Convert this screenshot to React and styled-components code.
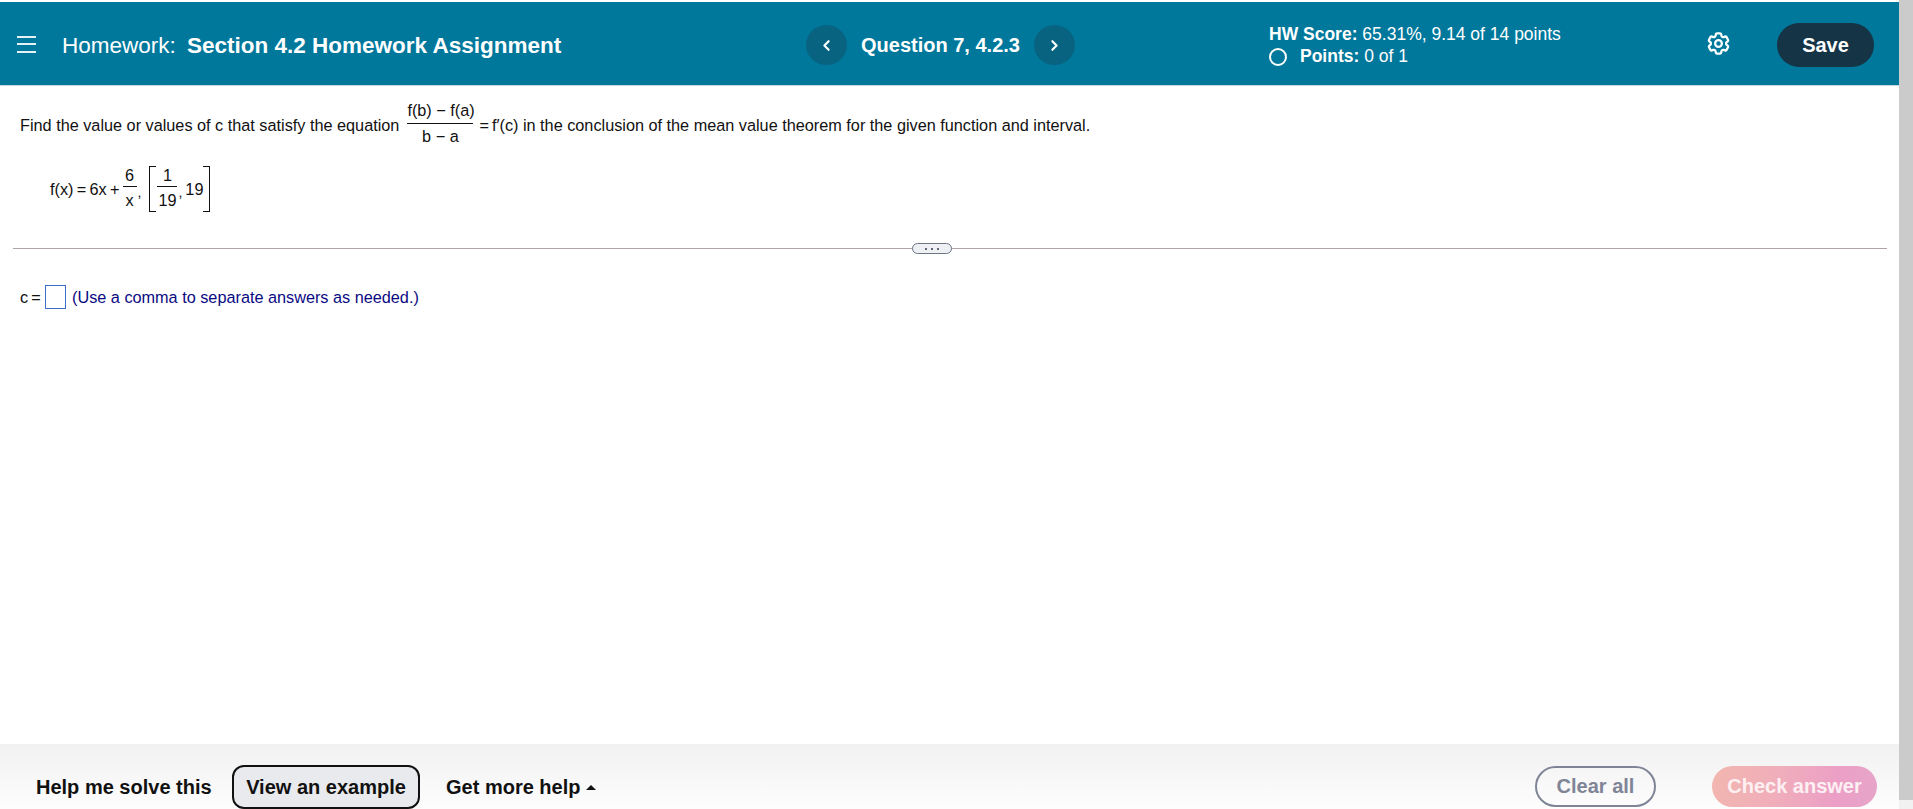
import React from "react";
import styled, { createGlobalStyle } from "styled-components";
import { ChevronLeft, ChevronRight } from "lucide-react";
import { HiOutlineCog6Tooth } from "react-icons/hi2";

const Global = createGlobalStyle`
  html, body {
    margin: 0;
    padding: 0;
    height: 100%;
    overflow: hidden;
    background: #fff;
  }
  body {
    font-family: "Liberation Sans", Arial, sans-serif;
    color: #111;
  }
`;

const App = () => {
  return (
    <>
      <Global />
      <Page>
        <Main>
          <Header>
            <HeaderLeft>
              <Burger>
                <span />
                <span />
                <span />
              </Burger>
              <Title>
                Homework: <strong>Section 4.2 Homework Assignment</strong>
              </Title>
            </HeaderLeft>
            <HeaderNav>
              <NavButton>
                <ChevronLeft size={17} strokeWidth={3} />
              </NavButton>
              <QuestionLabel>Question 7, 4.2.3</QuestionLabel>
              <NavButton>
                <ChevronRight size={17} strokeWidth={3} />
              </NavButton>
            </HeaderNav>
            <Score>
              <ScoreLine>
                <b>HW Score:</b> 65.31%, 9.14 of 14 points
              </ScoreLine>
              <ScoreLine>
                <Radio />
                <b>Points:</b> 0 of 1
              </ScoreLine>
            </Score>
            <GearWrap>
              <HiOutlineCog6Tooth size={27} strokeWidth={2} />
            </GearWrap>
            <SaveButton>Save</SaveButton>
          </Header>

          <Question>
            <Prompt>
              <span>Find the value or values of c that satisfy the equation</span>
              <PromptFraction>
                <Top>f(b) − f(a)</Top>
                <Bottom>b − a</Bottom>
              </PromptFraction>
              <Tight>= f′(c)</Tight>
              <span> in the conclusion of the mean value theorem for the given function and interval.</span>
            </Prompt>
            <Formula>
              <FormulaText>f(x) = 6x +</FormulaText>
              <SmallFraction $width={14}>
                <SmallTop>6</SmallTop>
                <SmallBottom>x</SmallBottom>
              </SmallFraction>
              <Comma $after={8}>,</Comma>
              <Bracket />
              <BracketBody>
                <SmallFraction $width={20} $left={1}>
                  <SmallTop>1</SmallTop>
                  <SmallBottom>19</SmallBottom>
                </SmallFraction>
                <Comma $after={3}>,</Comma>
                <span>19</span>
              </BracketBody>
              <Bracket $right />
            </Formula>
          </Question>

          <Divider>
            <Pill>
              <i />
              <i />
              <i />
            </Pill>
          </Divider>

          <Answer>
            <AnswerLabel>c =</AnswerLabel>
            <AnswerBox />
            <Hint>(Use a comma to separate answers as needed.)</Hint>
          </Answer>

          <Footer>
            <HelpLink>Help me solve this</HelpLink>
            <ExampleButton>View an example</ExampleButton>
            <MoreHelp>
              Get more help
              <Caret />
            </MoreHelp>
            <FooterRight>
              <ClearButton>Clear all</ClearButton>
              <CheckButton>Check answer</CheckButton>
            </FooterRight>
          </Footer>
        </Main>
        <Scrollbar>
          <ScrollCorner />
        </Scrollbar>
      </Page>
    </>
  );
};

export default App;

const Page = styled.div`
  display: flex;
  width: 1913px;
  height: 809px;
  overflow: hidden;
`;

const Main = styled.div`
  width: 1899px;
  height: 809px;
  display: flex;
  flex-direction: column;
`;

const Scrollbar = styled.div`
  width: 14px;
  height: 809px;
  background: #cbcbcb;
  display: flex;
  flex-direction: column;
  justify-content: flex-end;
`;

const ScrollCorner = styled.div`
  height: 9px;
  background: #f1f1f1;
`;

const Header = styled.header`
  margin-top: 2px;
  height: 84px;
  box-sizing: border-box;
  flex: none;
  background: #00789c;
  border-bottom: 1px solid #c5d6de;
  color: #fff;
  display: flex;
  align-items: center;
  padding: 3px 25px 0 17px;
`;

const HeaderLeft = styled.div`
  display: flex;
  align-items: center;
  width: 789px;
`;

const Burger = styled.div`
  width: 19px;
  margin: 0 26px 2px 0;
  display: flex;
  flex-direction: column;
  gap: 5.5px;

  span {
    display: block;
    height: 2px;
    background: #e6f1f5;
  }
`;

const Title = styled.div`
  font-size: 22.5px;
  white-space: pre;
  padding-top: 1px;

  strong {
    font-weight: 700;
    margin-left: 5px;
  }
`;

const HeaderNav = styled.div`
  display: flex;
  align-items: center;
  width: 463px;
`;

const NavButton = styled.div`
  width: 41px;
  height: 40px;
  border-radius: 50%;
  background: #086381;
  display: flex;
  align-items: center;
  justify-content: center;
`;

const QuestionLabel = styled.div`
  font-size: 20px;
  font-weight: 700;
  margin: 0 14px;
`;

const Score = styled.div`
  width: 431px;
  font-size: 17.5px;
  display: flex;
  flex-direction: column;
  gap: 1px;
  padding-top: 1px;
`;

const ScoreLine = styled.div`
  display: flex;
  align-items: center;
  white-space: pre;

  b {
    font-weight: 700;
  }
`;

const Radio = styled.span`
  width: 14px;
  height: 14px;
  border: 2px solid #fff;
  border-radius: 50%;
  margin-right: 13px;
`;

const GearWrap = styled.div`
  width: 60px;
  margin: 0 0 3px 5px;
  display: flex;
`;

const SaveButton = styled.div`
  width: 97px;
  height: 44px;
  border-radius: 22px;
  background: #153446;
  color: #fff;
  font-size: 20px;
  font-weight: 700;
  display: flex;
  align-items: center;
  justify-content: center;
  margin-left: auto;
`;

const Question = styled.div`
  height: 162px;
  flex: none;
  padding: 0 20px;
  font-size: 16.25px;
`;

const Prompt = styled.div`
  display: flex;
  align-items: center;
  height: 60px;
  padding-top: 9px;
  white-space: pre;
`;

const PromptFraction = styled.div`
  display: flex;
  flex-direction: column;
  align-items: center;
  width: 66px;
  margin: 0 6px 4px 8px;
`;

const Tight = styled.span`
  word-spacing: -1.5px;
`;

const Top = styled.div`
  align-self: stretch;
  text-align: center;
  border-bottom: 1px solid #111;
  padding-bottom: 4px;
  line-height: 18px;
`;

const Bottom = styled.div`
  text-align: center;
  padding-top: 3px;
  line-height: 18px;
`;

const Formula = styled.div`
  display: flex;
  align-items: center;
  height: 46px;
  margin: 11px 0 0 30px;
  white-space: pre;
`;

const FormulaText = styled.span`
  word-spacing: -1.2px;
  margin-right: 3px;
`;

const SmallFraction = styled.div`
  display: flex;
  flex-direction: column;
  align-items: center;
  width: ${(p) => p.$width}px;
  margin: 0 0 3px ${(p) => p.$left || 0}px;
`;

const SmallTop = styled(Top)`
  padding-bottom: 2px;
`;

const SmallBottom = styled(Bottom)`
  padding-top: 4px;
`;

const Comma = styled.span`
  font-size: 14px;
  margin: 6px ${(p) => p.$after}px 0 1px;
`;

const Bracket = styled.span`
  width: 6px;
  height: 44px;
  border: 1px solid #111;
  border-width: 1px 0 1px 1px;
  ${(p) => p.$right && "border-width: 1px 1px 1px 0;"}
`;

const BracketBody = styled.div`
  display: flex;
  align-items: center;
`;

const Divider = styled.div`
  position: relative;
  height: 1px;
  flex: none;
  margin: 0 12px 0 13px;
  background: #b1a3aa;
`;

const Pill = styled.div`
  position: absolute;
  left: 899px;
  top: -5px;
  width: 38px;
  height: 9px;
  border: 1px solid #6b7584;
  border-radius: 6px;
  background: #eef0f3;
  display: flex;
  align-items: center;
  justify-content: center;
  gap: 4px;

  i {
    width: 2px;
    height: 2px;
    background: #5c6675;
  }
`;

const Answer = styled.div`
  margin-top: 36px;
  padding-left: 20px;
  height: 24px;
  display: flex;
  align-items: center;
  font-size: 16.25px;
  flex: none;
`;

const AnswerLabel = styled.span`
  width: 25px;
  word-spacing: -1.5px;
  padding-top: 1px;
`;

const AnswerBox = styled.div`
  width: 19px;
  height: 22px;
  border: 1px solid #3b6fc4;
  margin-right: 6px;
`;

const Hint = styled.span`
  color: #0a0a82;
  padding-top: 1px;
`;

const Footer = styled.footer`
  margin-top: auto;
  height: 65px;
  flex: none;
  box-sizing: border-box;
  padding: 21px 22px 0 36px;
  background: linear-gradient(#f1f1f2, #fdfdfd);
  display: flex;
  align-items: flex-start;
  overflow: hidden;
`;

const HelpLink = styled.div`
  font-size: 20px;
  font-weight: 700;
  line-height: 44px;
  width: 196px;
`;

const ExampleButton = styled.div`
  box-sizing: border-box;
  width: 188px;
  height: 44px;
  border: 2px solid #111;
  border-radius: 12px;
  background: #e9eaed;
  font-size: 20px;
  font-weight: 700;
  display: flex;
  align-items: center;
  justify-content: center;
`;

const MoreHelp = styled.div`
  margin-left: 26px;
  font-size: 20px;
  font-weight: 700;
  line-height: 44px;
  display: flex;
  align-items: center;
`;

const Caret = styled.span`
  margin-left: 6px;
  width: 0;
  height: 0;
  border-left: 5px solid transparent;
  border-right: 5px solid transparent;
  border-bottom: 5px solid #111;
`;

const FooterRight = styled.div`
  margin-left: auto;
  display: flex;
  gap: 56px;
  padding-top: 1px;
`;

const ClearButton = styled.div`
  box-sizing: border-box;
  width: 121px;
  height: 41px;
  border: 2px solid #7f8596;
  border-radius: 21px;
  color: #7f8596;
  font-size: 20px;
  font-weight: 700;
  display: flex;
  align-items: center;
  justify-content: center;
`;

const CheckButton = styled.div`
  width: 165px;
  height: 41px;
  border-radius: 21px;
  background: linear-gradient(100deg, #f2b6ae 0%, #f0aebb 40%, #ec9fc6 75%, #e6a5c9 100%);
  color: #fdf0f3;
  font-size: 20px;
  font-weight: 700;
  display: flex;
  align-items: center;
  justify-content: center;
`;
